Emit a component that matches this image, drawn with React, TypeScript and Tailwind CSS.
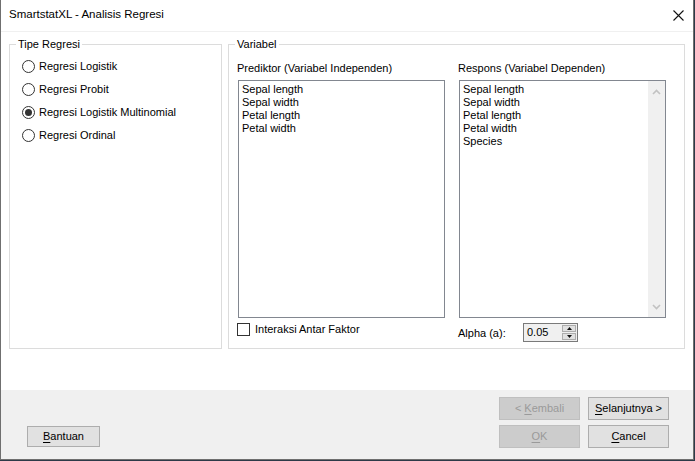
import React from "react";

const ui = "font-['Liberation_Sans',Arial,sans-serif]";

const Radio = ({ label, checked }: { label: string; checked?: boolean }) => (
  <div className="flex h-[23px] items-center gap-[4px]">
    <span className="flex h-[13px] w-[13px] items-center justify-center rounded-full border border-[#333333] bg-white">
      {checked && <span className="h-[7px] w-[7px] rounded-full bg-[#333333]" />}
    </span>
    <span>{label}</span>
  </div>
);

const GroupBox = ({
  title,
  className,
  children,
}: {
  title: string;
  className: string;
  children: React.ReactNode;
}) => (
  <div className={`relative h-[305px] border border-[#dcdcdc] ${className}`}>
    <span className="absolute left-[6px] top-[-8px] bg-white px-[2px] leading-[14px]">{title}</span>
    {children}
  </div>
);

const ListBox = ({ items, scroll }: { items: string[]; scroll?: boolean }) => (
  <div className="flex h-[238px] w-[207px] border border-[#828790] bg-white">
    <div className="flex-1 pl-[3px] pt-[2px] leading-[13px]">
      {items.map((it) => (
        <div key={it}>{it}</div>
      ))}
    </div>
    {scroll && (
      <div className="flex w-[17px] flex-col items-center justify-between bg-[#f0f0f0] pb-[7px] pt-[8px]">
        <svg width="9" height="6" viewBox="0 0 9 6">
          <path d="M1 5 L4.5 1.5 L8 5" fill="none" stroke="#c2c2c2" strokeWidth="1.6" />
        </svg>
        <svg width="9" height="6" viewBox="0 0 9 6">
          <path d="M1 1 L4.5 4.5 L8 1" fill="none" stroke="#c2c2c2" strokeWidth="1.6" />
        </svg>
      </div>
    )}
  </div>
);

const Btn = ({
  children,
  disabled,
  className = "w-[81px] h-[23px]",
}: {
  children: React.ReactNode;
  disabled?: boolean;
  className?: string;
}) => (
  <div
    className={`flex items-center justify-center border ${className} ${
      disabled ? "border-[#bfbfbf] bg-[#cccccc] text-[#9a9a9a]" : "border-[#adadad] bg-[#e1e1e1] text-black"
    }`}
  >
    {children}
  </div>
);

const predictors = ["Sepal length", "Sepal width", "Petal length", "Petal width"];

export default function App() {
  return (
    <div className={`h-[461px] w-[695px] bg-[#2d3a48] ${ui} text-[11px] text-black`}>
      <div className="flex h-[460px] w-[694px] flex-col border-x border-b border-[#6f6f6f] bg-white">
        {/* title bar */}
        <div className="flex h-[32px] shrink-0 items-center justify-between border-b border-[#f0f0f0] pl-[8px] pr-[9px]">
          <span className="pb-[1px] text-[11.5px]">SmartstatXL - Analisis Regresi</span>
          <svg width="11" height="11" viewBox="0 0 11 11">
            <path d="M0.5 0.5 L10.5 10.5 M10.5 0.5 L0.5 10.5" stroke="#111" strokeWidth="1.1" />
          </svg>
        </div>

        {/* content */}
        <div className="flex h-[358px] shrink-0 gap-[6px] pl-[8px] pt-[12px]">
          <GroupBox title="Tipe Regresi" className="w-[213px]">
            <div className="pl-[12px] pt-[10px]">
              <Radio label="Regresi Logistik" />
              <Radio label="Regresi Probit" />
              <Radio label="Regresi Logistik Multinomial" checked />
              <Radio label="Regresi Ordinal" />
            </div>
          </GroupBox>

          <GroupBox title="Variabel" className="w-[457px]">
            <div className="flex pl-[8px] pt-[16px]">
              <div className="w-[221px]">
                <div className="leading-[14px]">Prediktor (Variabel Independen)</div>
                <div className="ml-[1px] mt-[5px]">
                  <ListBox items={predictors} />
                </div>
                <div className="mt-[5px] flex items-center gap-[5px]">
                  <span className="h-[13px] w-[13px] border border-[#333333] bg-white" />
                  <span className="leading-[13px]">Interaksi Antar Faktor</span>
                </div>
              </div>
              <div className="w-[208px]">
                <div className="leading-[14px]">Respons (Variabel Dependen)</div>
                <div className="ml-[1px] mt-[5px]">
                  <ListBox items={[...predictors, "Species"]} scroll />
                </div>
                <div className="mt-[5px] flex h-[19px] items-center">
                  <span className="w-[65px] pt-[2px]">Alpha (a):</span>
                  <div className="flex h-[19px] w-[55px] items-center border border-[#7a7a7a] bg-[#f0f0f0]">
                    <span className="flex-1 pl-[3px]">0.05</span>
                    <div className="mr-[1px] flex h-[15px] w-[14px] flex-col gap-[1px]">
                      <div className="flex flex-1 items-center justify-center border border-[#adadad] bg-[#e1e1e1]">
                        <svg width="5" height="3" viewBox="0 0 5 3">
                          <path d="M0 3 L2.5 0 L5 3Z" fill="#111" />
                        </svg>
                      </div>
                      <div className="flex flex-1 items-center justify-center border border-[#adadad] bg-[#e1e1e1]">
                        <svg width="5" height="3" viewBox="0 0 5 3">
                          <path d="M0 0 L2.5 3 L5 0Z" fill="#111" />
                        </svg>
                      </div>
                    </div>
                  </div>
                </div>
              </div>
            </div>
          </GroupBox>
        </div>

        {/* footer */}
        <div className="flex flex-1 items-end justify-between bg-[#f0f0f0] pb-[12px] pl-[26px] pr-[24px]">
          <Btn className="h-[21px] w-[73px]">
            <span>
              <span className="underline underline-offset-2">B</span>antuan
            </span>
          </Btn>
          <div className="mb-[-1px] flex flex-col gap-[5px]">
            <div className="flex gap-[8px]">
              <Btn disabled>
                <span>
                  &lt; <span className="underline underline-offset-2">K</span>embali
                </span>
              </Btn>
              <Btn>
                <span>
                  <span className="underline underline-offset-2">S</span>elanjutnya &gt;
                </span>
              </Btn>
            </div>
            <div className="flex gap-[8px]">
              <Btn disabled>
                <span>
                  <span className="underline underline-offset-2">O</span>K
                </span>
              </Btn>
              <Btn>
                <span>
                  <span className="underline underline-offset-2">C</span>ancel
                </span>
              </Btn>
            </div>
          </div>
        </div>
      </div>
    </div>
  );
}
